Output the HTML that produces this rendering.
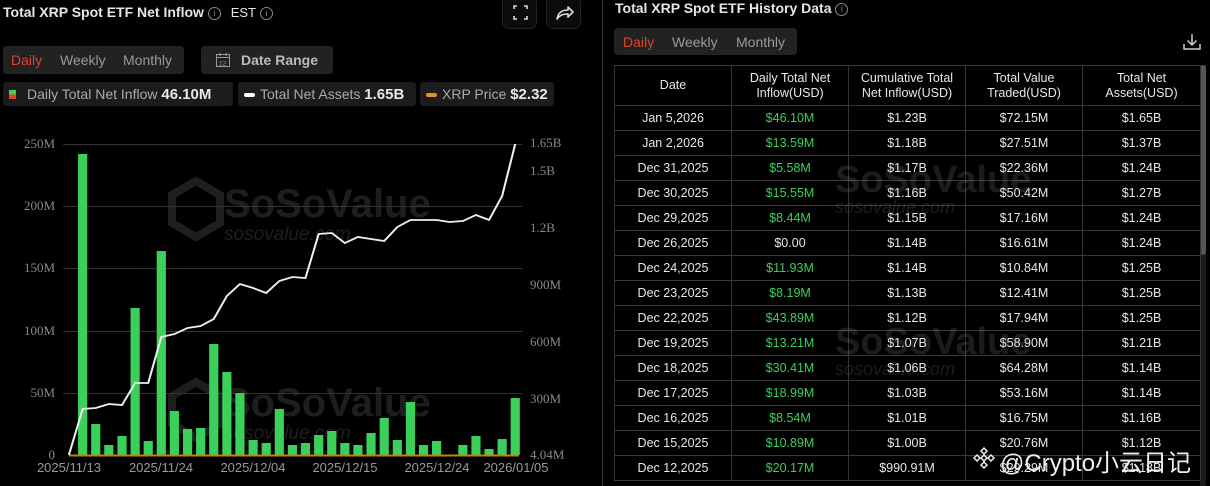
<!DOCTYPE html>
<html><head><meta charset="utf-8"><style>
*{margin:0;padding:0;box-sizing:border-box}
body{width:1210px;height:486px;background:#000;color:#ddd;font-family:"Liberation Sans",sans-serif;position:relative;overflow:hidden}
.abs{position:absolute}
.title{font-weight:bold;font-size:14px;color:#e6e6e6}
.info{display:inline-block;width:13px;height:13px;border:1px solid #888;border-radius:50%;font-size:9px;color:#888;text-align:center;line-height:11px;vertical-align:middle;font-weight:normal}
.seg{background:#222;border-radius:4px;font-size:14px;color:#999}
.seg span{position:absolute;top:0}
.btn{border:1px solid #222;border-radius:7px;background:#0b0b0b}
.leg{background:#1c1c1c;border-radius:3px;height:24px;font-size:14px;color:#aaa;line-height:24px;padding-left:6px;white-space:nowrap}
.leg b{color:#e8e8e8;font-size:15px}
table{border-collapse:collapse;position:absolute;left:614px;top:65px;font-size:12.5px;color:#e8e8e8;table-layout:fixed}
td{border:1px solid #333;text-align:center;height:25px;padding:0;border-top:none;border-bottom:1px solid #3a3a3a}
tr.h td{height:40px;line-height:15px;border-top:1px solid #3a3a3a}
td.g{color:#3ad05a}
</style></head><body>
<div class="abs title" style="left:3px;top:4px">Total XRP Spot ETF Net Inflow <span class="info">i</span> <span style="font-weight:normal;font-size:13px;margin-left:6px">EST</span> <span class="info">i</span></div>
<div class="abs btn" style="left:502px;top:-4px;width:35px;height:33px"><svg width="35" height="33"><path d="M11 12v-3h3M21 9h3v3M24 19v3h-3M14 22h-3v-3" stroke="#ddd" stroke-width="1.6" fill="none"/></svg></div>
<div class="abs btn" style="left:546px;top:-4px;width:35px;height:33px"><svg width="35" height="33"><path d="M10 22c1-6 5-9 11-9v-3l5 5-5 5v-3c-5 0-8 1-11 5z" stroke="#ddd" stroke-width="1.6" fill="none" stroke-linejoin="round"/></svg></div>
<div class="abs seg" style="left:3px;top:46px;width:181px;height:28px"><span style="left:8px;top:6px;color:#e8402a">Daily</span><span style="left:57px;top:6px">Weekly</span><span style="left:120px;top:6px">Monthly</span></div>
<div class="abs" style="left:201px;top:46px;width:132px;height:28px;background:#222;border-radius:4px"><svg class="abs" style="left:14px;top:6px" width="16" height="16"><rect x="1.5" y="2.5" width="13" height="12" fill="none" stroke="#999"/><path d="M1.5 5.5h13M5 1v3M11 1v3" stroke="#999"/><text x="4" y="13.5" font-size="6.5" fill="#999">12</text></svg><span class="abs" style="left:40px;top:6px;font-weight:bold;color:#bbb;font-size:14px">Date Range</span></div>
<div class="abs leg" style="left:3px;top:82px;width:230px"><span style="display:inline-block;width:7px;height:9px;background:linear-gradient(#3ad05a 50%,#e8402a 50%);margin-right:11px"></span>Daily Total Net Inflow <b>46.10M</b></div>
<div class="abs leg" style="left:238px;top:82px;width:178px"><span style="display:inline-block;width:11px;height:4px;background:#fff;border-radius:2px;vertical-align:middle;margin-right:5px"></span>Total Net Assets <b>1.65B</b></div>
<div class="abs leg" style="left:420px;top:82px;width:134px"><span style="display:inline-block;width:11px;height:4px;background:#d89a1a;border-radius:2px;vertical-align:middle;margin-right:5px"></span>XRP Price <b>$2.32</b></div>
<svg class="abs" style="left:0;top:0" width="600" height="486" font-family="Liberation Serif" font-size="13" fill="#888">
<g opacity="0.16" fill="#bbb" font-family="Liberation Sans" font-weight="bold"><path d="M172 195l24-14 24 14v28l-24 14-24-14z" fill="none" stroke="#bbb" stroke-width="8"/><text x="224" y="217" font-size="40">SoSoValue</text><text x="224" y="240" font-size="19" font-weight="normal" font-style="italic">sosovalue.com</text>
<path d="M172 396l24-14 24 14v28l-24 14-24-14z" fill="none" stroke="#bbb" stroke-width="8"/><text x="224" y="416" font-size="40">SoSoValue</text><text x="224" y="439" font-size="19" font-weight="normal" font-style="italic">sosovalue.com</text></g>
<g transform="scale(1.148,1)">
<g stroke="#333" stroke-width="1"><path d="M55 144.5h400M55 206.5h400M55 268.5h400M55 331.5h400M55 393.5h400"/></g>
<g fill="#3ad05a">
<rect x="68" y="154" width="8" height="301"/><rect x="79.4" y="424" width="8" height="31"/><rect x="90.8" y="445" width="8" height="10"/><rect x="102.3" y="436" width="8" height="19"/><rect x="113.7" y="308" width="8" height="147"/><rect x="125.1" y="441" width="8" height="14"/><rect x="136.5" y="251" width="8" height="204"/><rect x="147.9" y="411" width="8" height="44"/><rect x="159.4" y="429" width="8" height="26"/><rect x="170.8" y="428" width="8" height="27"/><rect x="182.2" y="344" width="8" height="111"/><rect x="193.6" y="372" width="8" height="83"/><rect x="205" y="393" width="8" height="62"/><rect x="216.5" y="440" width="8" height="15"/><rect x="227.9" y="443" width="8" height="12"/><rect x="239.3" y="409" width="8" height="46"/><rect x="250.7" y="445" width="8" height="10"/><rect x="262.1" y="443" width="8" height="12"/><rect x="273.6" y="435" width="8" height="20"/><rect x="285" y="431" width="8" height="24"/><rect x="296.4" y="443" width="8" height="12"/><rect x="307.8" y="445" width="8" height="10"/><rect x="319.2" y="433" width="8" height="22"/><rect x="330.7" y="418" width="8" height="37"/><rect x="342.1" y="440" width="8" height="15"/><rect x="353.5" y="402" width="8" height="53"/><rect x="364.9" y="445" width="8" height="10"/><rect x="376.3" y="441" width="8" height="14"/><rect x="399.2" y="445" width="8" height="10"/><rect x="410.6" y="436" width="8" height="19"/><rect x="422" y="449" width="8" height="6"/><rect x="433.4" y="439" width="8" height="16"/><rect x="444.8" y="398" width="8" height="57"/>
</g>
<path d="M60 455.5h392" stroke="#c8820a" stroke-width="2"/>
<polyline fill="none" stroke="#eee" stroke-width="1.8" points="60,455 72,409 83.4,408 94.8,404 106.3,405 117.7,383 129.1,383 140.5,337 151.9,334 163.4,328 174.8,326 186.2,319 197.6,296 209,284 220.5,288 231.9,293 243.3,281 254.7,277 266.1,278 277.6,234 289,233 300.4,243 311.8,237 323.2,239 334.7,241 346.1,227 357.5,220 368.9,220 380.3,220 391.7,222 403.2,221 414.6,215 426,220 437.4,196 448.8,144"/>
</g>
<g text-anchor="end"><text x="55" y="148">250M</text><text x="55" y="210">200M</text><text x="55" y="272">150M</text><text x="55" y="335">100M</text><text x="55" y="397">50M</text><text x="55" y="459">0</text></g>
<g><text x="530" y="147">1.65B</text><text x="530" y="175">1.5B</text><text x="530" y="232">1.2B</text><text x="530" y="289">900M</text><text x="530" y="346">600M</text><text x="530" y="403">300M</text><text x="530" y="459">4.04M</text></g>
<g font-family="Liberation Sans" font-size="13" fill="#999" text-anchor="middle"><text x="69" y="472">2025/11/13</text><text x="161" y="472">2025/11/24</text><text x="253" y="472">2025/12/04</text><text x="345" y="472">2025/12/15</text><text x="437" y="472">2025/12/24</text><text x="516" y="472">2026/01/05</text></g>
</svg>
<div class="abs" style="left:602px;top:0;width:1px;height:486px;background:#333"></div>
<div class="abs title" style="left:615px;top:0px">Total XRP Spot ETF History Data <span class="info">i</span></div>
<div class="abs seg" style="left:614px;top:28px;width:183px;height:27px"><span style="left:9px;top:6px;color:#e8402a">Daily</span><span style="left:58px;top:6px">Weekly</span><span style="left:122px;top:6px">Monthly</span></div>
<svg class="abs" style="left:1182px;top:32px" width="20" height="20"><path d="M10 2v11M5.5 8.5L10 13l4.5-4.5M2 12v5h16v-5" stroke="#ccc" stroke-width="1.5" fill="none"/></svg>
<div class="abs" style="left:1200px;top:65px;width:6px;height:421px;background:#1a1a1a"></div>
<div class="abs" style="left:1200px;top:65px;width:6px;height:190px;background:#555;border-radius:3px"></div>
<table style="width:586px">
<tr class="h"><td style="width:117px">Date</td><td style="width:117px">Daily Total Net<br>Inflow(USD)</td><td style="width:117px">Cumulative Total<br>Net Inflow(USD)</td><td style="width:117px">Total Value<br>Traded(USD)</td><td style="width:118px">Total Net<br>Assets(USD)</td></tr>
<tr><td>Jan 5,2026</td><td class="g">$46.10M</td><td>$1.23B</td><td>$72.15M</td><td>$1.65B</td></tr>
<tr><td>Jan 2,2026</td><td class="g">$13.59M</td><td>$1.18B</td><td>$27.51M</td><td>$1.37B</td></tr>
<tr><td>Dec 31,2025</td><td class="g">$5.58M</td><td>$1.17B</td><td>$22.36M</td><td>$1.24B</td></tr>
<tr><td>Dec 30,2025</td><td class="g">$15.55M</td><td>$1.16B</td><td>$50.42M</td><td>$1.27B</td></tr>
<tr><td>Dec 29,2025</td><td class="g">$8.44M</td><td>$1.15B</td><td>$17.16M</td><td>$1.24B</td></tr>
<tr><td>Dec 26,2025</td><td>$0.00</td><td>$1.14B</td><td>$16.61M</td><td>$1.24B</td></tr>
<tr><td>Dec 24,2025</td><td class="g">$11.93M</td><td>$1.14B</td><td>$10.84M</td><td>$1.25B</td></tr>
<tr><td>Dec 23,2025</td><td class="g">$8.19M</td><td>$1.13B</td><td>$12.41M</td><td>$1.25B</td></tr>
<tr><td>Dec 22,2025</td><td class="g">$43.89M</td><td>$1.12B</td><td>$17.94M</td><td>$1.25B</td></tr>
<tr><td>Dec 19,2025</td><td class="g">$13.21M</td><td>$1.07B</td><td>$58.90M</td><td>$1.21B</td></tr>
<tr><td>Dec 18,2025</td><td class="g">$30.41M</td><td>$1.06B</td><td>$64.28M</td><td>$1.14B</td></tr>
<tr><td>Dec 17,2025</td><td class="g">$18.99M</td><td>$1.03B</td><td>$53.16M</td><td>$1.14B</td></tr>
<tr><td>Dec 16,2025</td><td class="g">$8.54M</td><td>$1.01B</td><td>$16.75M</td><td>$1.16B</td></tr>
<tr><td>Dec 15,2025</td><td class="g">$10.89M</td><td>$1.00B</td><td>$20.76M</td><td>$1.12B</td></tr>
<tr><td>Dec 12,2025</td><td class="g">$20.17M</td><td>$990.91M</td><td>$29.29M</td><td>$1.18B</td></tr>
</table>
<svg class="abs" style="left:600px;top:0" width="610" height="486" font-family="Liberation Sans" font-weight="bold" fill="#bbb" opacity="0.15"><text x="235" y="192" font-size="38">SoSoValue</text><text x="235" y="213" font-size="18" font-weight="normal" font-style="italic">sosovalue.com</text><text x="235" y="354" font-size="38">SoSoValue</text><text x="235" y="375" font-size="18" font-weight="normal" font-style="italic">sosovalue.com</text></svg>
<svg class="abs" style="left:972px;top:446px" width="24" height="24"><path d="M12 2l3 3-3 3-3-3zM5 9l3 3-3 3-3-3zM19 9l3 3-3 3-3-3zM12 16l3 3-3 3-3-3zM12 9l3 3-3 3-3-3z" fill="none" stroke="#eee" stroke-width="1.5"/></svg>
<div class="abs" style="left:1000px;top:443px;font-size:24px;color:#eee;font-family:'Liberation Sans','Noto Sans CJK SC',sans-serif;white-space:nowrap">@Crypto小云日记</div>
</body></html>
